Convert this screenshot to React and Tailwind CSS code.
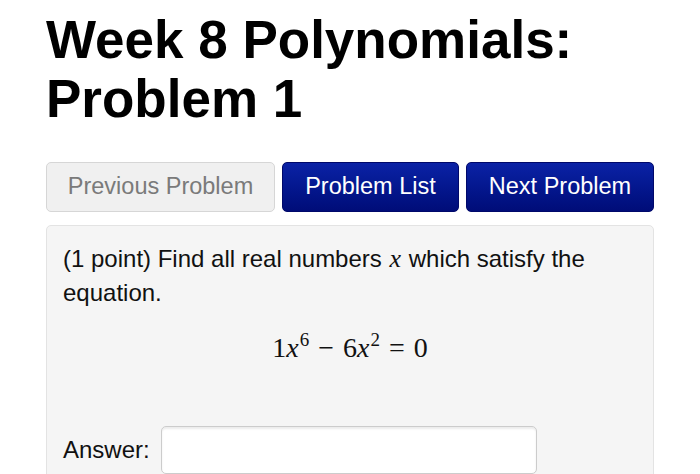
export default function App() {
  return (
    <div className="min-h-screen bg-white px-[46px] pt-[10px] font-['Liberation_Sans',Arial,sans-serif] text-[#111]">
      <h1 className="text-[53px] font-bold leading-[59px] text-black">
        Week 8 Polynomials:
        <br />
        Problem 1
      </h1>

      <div className="mt-[34px] flex gap-[7px]">
        <button className="h-[50px] w-[229px] rounded-[5px] border border-[#d6d6d6] bg-[#f0f0f0] text-[23.5px] text-[#7a7a7a]">
          Previous Problem
        </button>
        <button className="h-[50px] w-[177px] rounded-[5px] border border-[#00086a] bg-gradient-to-b from-[#0b22a6] to-[#000c78] text-[23.5px] text-white">
          Problem List
        </button>
        <button className="h-[50px] w-[188px] rounded-[5px] border border-[#00086a] bg-gradient-to-b from-[#0b22a6] to-[#000c78] text-[23.5px] text-white">
          Next Problem
        </button>
      </div>

      <div className="mt-[13px] rounded-[5px] border border-[#e3e3e3] bg-[#f5f5f5] px-[16px] pt-[16px] pb-[20px]">
        <p className="text-[24px] leading-[34px]">
          (1 point) Find all real numbers{" "}
          <i className="mx-[1px] font-['Liberation_Serif',serif] text-[26px]">x</i> which satisfy the
          equation.
        </p>

        <div className="mt-[18px] flex h-[40px] items-center justify-center font-['Liberation_Serif',serif] text-[28px]">
          <span>1</span>
          <i>x</i>
          <span className="relative -top-[8px] ml-[1px] text-[19px]">6</span>
          <span className="mx-[9px]">−</span>
          <span>6</span>
          <i>x</i>
          <span className="relative -top-[8px] ml-[1px] text-[19px]">2</span>
          <span className="mx-[9px]">=</span>
          <span>0</span>
        </div>

        <div className="mt-[58px] flex items-center gap-[11px]">
          <span className="text-[24px] leading-[34px]">Answer:</span>
          <input
            type="text"
            className="h-[48px] w-[376px] rounded-[5px] border border-[#cccccc] bg-white shadow-[inset_0_2px_2px_rgba(0,0,0,0.08)] outline-none"
          />
        </div>
      </div>
    </div>
  )
}
